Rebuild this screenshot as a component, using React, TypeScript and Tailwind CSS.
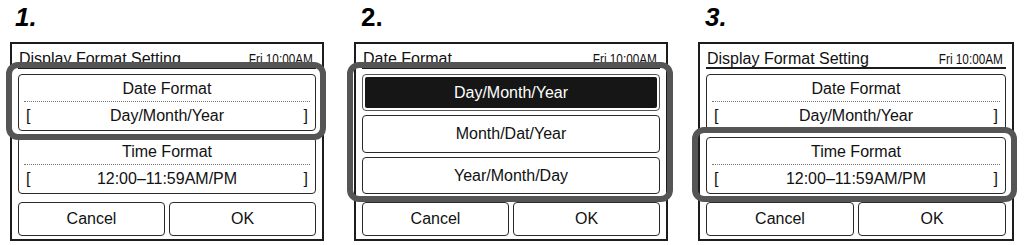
import React from "react";

const BOX = "rounded-[4px] border border-[#2a2a2a]";

function Header({ title }: { title: string }) {
  return (
    <div className="mt-[7px] flex items-baseline justify-between border-b-2 border-[#1c1c1c] leading-[15px]">
      <span className="pl-[1px] text-[16px]">{title}</span>
      <span className="inline-block origin-right scale-x-[0.84] pr-[4px] text-[14px]">Fri 10:00AM</span>
    </div>
  );
}

function SettingBox({ label, value, className = "" }: { label: string; value: string; className?: string }) {
  return (
    <div className={`flex h-[57px] flex-col ${BOX} ${className}`}>
      <div className="h-[26px] pt-[2px] text-center text-[16px] leading-[24px]">{label}</div>
      <div className="mx-[5px] border-t border-dotted border-[#777]" />
      <div className="flex h-[28px] px-[7px] text-[16px] leading-[28px]">
        <span>[</span>
        <span className="flex-1 text-center">{value}</span>
        <span>]</span>
      </div>
    </div>
  );
}

function Buttons() {
  return (
    <div className="mt-[8px] grid grid-cols-2 gap-[4px]">
      <div className={`h-[34px] text-center text-[16px] leading-[32px] ${BOX}`}>Cancel</div>
      <div className={`h-[34px] text-center text-[16px] leading-[32px] ${BOX}`}>OK</div>
    </div>
  );
}

function Label({ n, italic, pad }: { n: string; italic: boolean; pad: string }) {
  return (
    <div className={`h-[42px] pt-[2px] text-[26px] font-bold leading-[30px] text-black ${pad} ${italic ? "italic" : ""}`}>
      {n}
    </div>
  );
}

function DisplayPanel() {
  return (
    <div className="h-[199px] border-2 border-[#1c1c1c] px-[6px]">
      <Header title="Display Format Setting" />
      <SettingBox className="mt-[5px]" label="Date Format" value="Day/Month/Year" />
      <SettingBox className="mt-[6px]" label="Time Format" value="12:00–11:59AM/PM" />
      <Buttons />
    </div>
  );
}

export default function App() {
  return (
    <div className="flex h-[245px] w-[1024px] gap-[30px] overflow-hidden bg-white pl-[10px] font-['Liberation_Sans',Arial,sans-serif] text-[#111]">
      {/* Step 1 */}
      <div className="relative w-[314px] shrink-0">
        <Label n="1." italic pad="pl-[5px]" />
        <DisplayPanel />
        <div className="pointer-events-none absolute left-[-4px] top-[62px] h-[78px] w-[320px] rounded-[12px] border-[6px] border-[#555]" />
      </div>

      {/* Step 2 */}
      <div className="relative w-[314px] shrink-0">
        <Label n="2." italic={false} pad="pl-[7px]" />
        <div className="h-[199px] border-2 border-[#1c1c1c] px-[6px]">
          <Header title="Date Format" />
          <div className="mt-[5px] flex flex-col gap-[4px]">
            <div className="h-[37px] rounded-[4px] border border-[#555] p-[2px]">
              <div className="h-full rounded-[2px] bg-[#161616] text-center text-[16px] leading-[31px] text-white">
                Day/Month/Year
              </div>
            </div>
            <div className={`h-[38px] text-center text-[16px] leading-[36px] ${BOX}`}>Month/Dat/Year</div>
            <div className={`h-[37px] text-center text-[16px] leading-[35px] ${BOX}`}>Year/Month/Day</div>
          </div>
          <Buttons />
        </div>
        <div className="pointer-events-none absolute left-[-7px] top-[62px] h-[140px] w-[326px] rounded-[12px] border-[6px] border-[#555]" />
      </div>

      {/* Step 3 */}
      <div className="relative w-[316px] shrink-0">
        <Label n="3." italic pad="pl-[7px]" />
        <DisplayPanel />
        <div className="pointer-events-none absolute left-[-6px] top-[127px] h-[75px] w-[325px] rounded-[12px] border-[6px] border-[#555]" />
      </div>
    </div>
  );
}
